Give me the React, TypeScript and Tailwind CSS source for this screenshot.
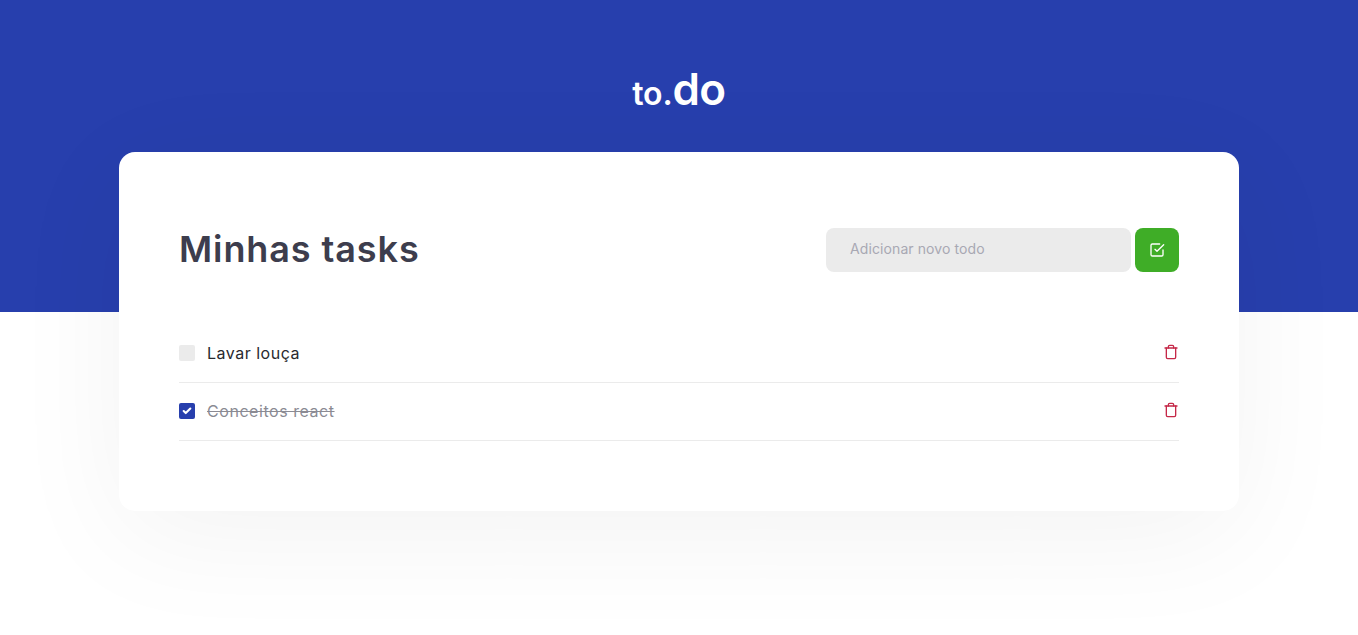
import React from "react";
import { FiCheck, FiCheckSquare, FiTrash } from "react-icons/fi";

const font = "font-['Inter','Liberation_Sans',sans-serif]";

const tasks = [
  { id: 1, title: "Lavar louça", done: false },
  { id: 2, title: "Conceitos react", done: true },
];

const TaskRow = ({ title, done }: { title: string; done: boolean }) => (
  <li className="flex h-[58px] items-center justify-between border-b border-[#ebebeb] pb-0.5">
    <div className="flex items-center gap-3">
      <span
        className={
          done
            ? "flex h-4 w-4 items-center justify-center rounded-[2px] bg-[#273fad] text-white"
            : "h-4 w-4 rounded-[2px] bg-[#ebebeb]"
        }
      >
        {done && <FiCheck size={10} strokeWidth={5} />}
      </span>
      <p
        className={
          done
            ? "text-base tracking-[0.55px] text-[#3d3d4d] line-through opacity-60"
            : "text-base tracking-[0.5px] text-[#29292e]"
        }
      >
        {title}
      </p>
    </div>
    <button className="mb-0.5 text-[#c52848]">
      <FiTrash size={16} />
    </button>
  </li>
);

export default function App() {
  return (
    <div className={`${font} min-h-[635px] overflow-hidden bg-white pb-[124px]`}>
      <header className="flex h-[312px] justify-center bg-[#273fad] pt-[64px]">
        <h1 className="h-[50px] font-semibold leading-[50px] tracking-[-0.2px] text-white">
          <span className="text-[32px]">to.</span>
          <span className="text-[44px] tracking-[-0.5px]">do</span>
        </h1>
      </header>
      <main className="mx-auto -mt-[160px] h-[359px] w-[1120px] rounded-2xl bg-white px-[60px] pt-[76px] shadow-[0_24px_120px_rgba(0,0,0,0.05)]">
        <div className="flex items-center justify-between">
          <h2 className="pb-0.5 text-4xl font-semibold tracking-[0.9px] text-[#3d3d4d]">
            Minhas tasks
          </h2>
          <div className="flex items-center gap-1">
            <div className="flex h-11 w-[305px] items-center rounded-lg bg-[#ebebeb] px-6 pb-0.5 text-sm tracking-[0.1px] text-[#a8a8b3]">
              Adicionar novo todo
            </div>
            <button className="flex h-11 w-11 items-center justify-center rounded-lg bg-[#3fad27] text-white">
              <FiCheckSquare size={16} />
            </button>
          </div>
        </div>
        <ul className="mt-[53px]">
          {tasks.map((task) => (
            <TaskRow key={task.id} title={task.title} done={task.done} />
          ))}
        </ul>
      </main>
    </div>
  );
}
